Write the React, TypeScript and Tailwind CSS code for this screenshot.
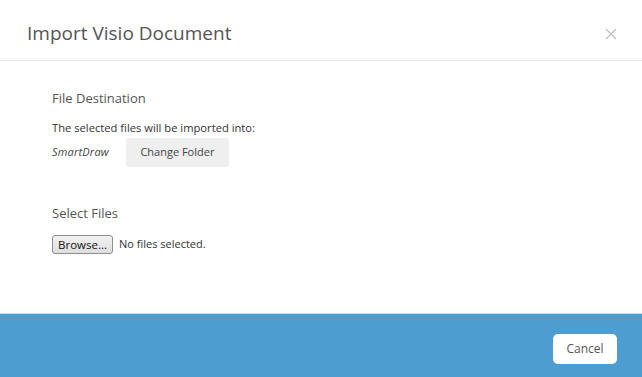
import React from 'react';

const ImportVisioDialog: React.FC = () => {
  return (
    <div
      className="w-[642px] h-[377px] bg-white flex flex-col overflow-hidden"
      style={{ fontFamily: '"Open Sans", "Noto Sans", sans-serif' }}
    >
      {/* header */}
      <div className="h-[61px] shrink-0 flex items-start justify-between pt-[22px] pl-[27px] pr-[24px] border-b border-[#e8e8e8]">
        <h1 className="text-[19px] text-[#555] font-normal leading-[22px]">Import Visio Document</h1>
        <button className="text-[#c0c0c0] w-[14px] h-[14px] mt-[5px] flex items-center justify-center">
          <svg width="12" height="12" viewBox="0 0 12 12" fill="none" stroke="currentColor" strokeWidth="1.4">
            <path d="M1 1 L11 11 M11 1 L1 11" />
          </svg>
        </button>
      </div>

      {/* body */}
      <div className="flex-1 flex flex-col pl-[52px] pt-[28px]">
        <div className="text-[13px] text-[#555] leading-[18px]">File Destination</div>
        <div className="mt-[14px] text-[11.2px] text-[#333] leading-[14px]">The selected files will be imported into:</div>
        <div className="mt-[3px] flex items-center gap-[17px]">
          <span className="text-[11px] italic text-[#444] tracking-[0.2px]">SmartDraw</span>
          <button className="h-[29px] w-[103px] bg-[#efefef] rounded-[3px] text-[11px] text-[#444]">Change Folder</button>
        </div>

        <div className="mt-[37px] text-[13px] text-[#555] leading-[18px]">Select Files</div>
        <div className="mt-[13px] flex items-center gap-[6px]">
          <button className="h-[19px] w-[61px] rounded-[3px] border border-[#8f8f8f] bg-gradient-to-b from-[#f2f2f2] to-[#dedede] text-[11.5px] text-[#111] leading-none">
            Browse...
          </button>
          <span className="text-[11px] text-[#333]">No files selected.</span>
        </div>
      </div>

      {/* footer */}
      <div className="h-[64px] shrink-0 bg-[#4e9dd0] border-t border-[#d8d8d8] flex items-start justify-end pt-[20px] pr-[25px]">
        <button className="h-[30px] w-[64px] bg-white rounded-[5px] text-[12px] text-[#555]">Cancel</button>
      </div>
    </div>
  );
};

export default function App() {
  return <ImportVisioDialog />;
}
